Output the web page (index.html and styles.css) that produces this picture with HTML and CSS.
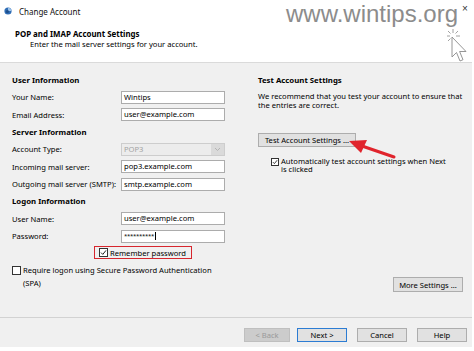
FILE: index.html
```html
<!DOCTYPE html>
<html lang="en">
<head>
    <meta charset="UTF-8">
    <meta name="viewport" content="width=device-width, initial-scale=1.0">
    <title>Change Account</title>
    <link rel="stylesheet" href="styles.css">
</head>
<body>
    <div class="dialog">
        <div class="titlebar">
            <svg class="app-icon" width="8" height="8" viewBox="0 0 8 8">
                <circle cx="4" cy="4" r="3.6" fill="#2f6db5"/>
                <path d="M4 0.8 A3.2 3.2 0 0 1 7.2 4 L4 4 Z" fill="#9cc3ea"/>
                <circle cx="3.4" cy="4.6" r="1.6" fill="#1d4f8c"/>
            </svg>
            <span>Change Account</span>
        </div>

        <div class="header">
            <div class="header-title">POP and IMAP Account Settings</div>
            <div class="header-sub">Enter the mail server settings for your account.</div>
        </div>

        <div class="content">
            <div class="col-left">
                <div class="section">User Information</div>
                <div class="row"><label>Your Name:</label><div class="field">Wintips</div></div>
                <div class="row"><label>Email Address:</label><div class="field">user@example.com</div></div>

                <div class="section">Server Information</div>
                <div class="row">
                    <label>Account Type:</label>
                    <div class="select">
                        <span>POP3</span>
                        <span class="select-arrow">
                            <svg width="7" height="5" viewBox="0 0 7 5"><path d="M1 1 L3.5 3.5 L6 1" fill="none" stroke="#b4b4b4" stroke-width="1"/></svg>
                        </span>
                    </div>
                </div>
                <div class="row"><label>Incoming mail server:</label><div class="field">pop3.example.com</div></div>
                <div class="row"><label>Outgoing mail server (SMTP):</label><div class="field">smtp.example.com</div></div>

                <div class="section">Logon Information</div>
                <div class="row"><label>User Name:</label><div class="field">user@example.com</div></div>
                <div class="row"><label>Password:</label><div class="field password">**********<span class="caret"></span></div></div>

                <div class="remember-row">
                    <span class="highlight">
                        <span class="checkbox checked">
                            <svg width="7" height="7" viewBox="0 0 7 7"><path d="M1 3.6 L2.8 5.4 L6 1.4" fill="none" stroke="#222" stroke-width="1"/></svg>
                        </span>
                        Remember password
                    </span>
                </div>

                <div class="spa">
                    <span class="checkbox"></span>
                    <span class="spa-text">Require logon using Secure Password Authentication<br>(SPA)</span>
                </div>
            </div>

            <div class="col-right">
                <div class="section">Test Account Settings</div>
                <div class="note">We recommend that you test your account to ensure that<br>the entries are correct.</div>
                <button class="btn btn-test">Test Account Settings ...</button>
                <div class="auto-check">
                    <span class="checkbox checked small">
                        <svg width="6" height="6" viewBox="0 0 7 7"><path d="M1 3.6 L2.8 5.4 L6 1.4" fill="none" stroke="#222" stroke-width="1"/></svg>
                    </span>
                    <span>Automatically test account settings when Next<br>is clicked</span>
                </div>
                <button class="btn btn-more">More Settings ...</button>
            </div>
        </div>

        <div class="footer">
            <button class="btn btn-back" disabled>&lt; Back</button>
            <button class="btn btn-next">Next &gt;</button>
            <button class="btn">Cancel</button>
            <button class="btn">Help</button>
        </div>
    </div>

    <div class="watermark">www.wintips.org</div>
    <div class="close-mark">&times;</div>

    <svg class="cursor-mark" width="24" height="40" viewBox="0 0 24 40">
        <g stroke="#8a8a8a" stroke-width="0.8">
            <line x1="7" y1="1" x2="7" y2="5"/>
            <line x1="1" y1="8" x2="4" y2="8"/>
            <line x1="2" y1="3" x2="4.5" y2="5.5"/>
            <line x1="12" y1="3" x2="9.5" y2="5.5"/>
            <line x1="14" y1="8" x2="10" y2="8"/>
            <line x1="2" y1="13" x2="4.5" y2="10.5"/>
        </g>
        <path d="M6 9 L6 29 L10.5 24.5 L14 33 L17 31.7 L13.6 23.5 L20 23.5 Z" fill="#fff" stroke="#8a8a8a" stroke-width="0.9"/>
    </svg>

    <svg class="red-arrow" width="60" height="24" viewBox="340 137 60 24">
        <line x1="394" y1="157" x2="362" y2="146" stroke="#e0242c" stroke-width="3" stroke-linecap="round"/>
        <polygon points="349,141 367,140 361,153" fill="#e0242c"/>
    </svg>
</body>
</html>
```

FILE: styles.css
```css
body {
    margin: 0;
    width: 474px;
    height: 351px;
    overflow: hidden;
    position: relative;
    background-color: #fff;
    font-family: "Noto Sans", "Open Sans", sans-serif;
    font-size: 7.6px;
    color: #000;
}
.dialog {
    width: 472px;
    height: 347px;
    display: flex;
    flex-direction: column;
    background-color: #f0f0f0;
}
.titlebar {
    height: 22px;
    flex-shrink: 0;
    background-color: #fff;
    display: flex;
    align-items: center;
    gap: 7px;
    padding-left: 4px;
    font-size: 8px;
    color: #111;
}
.header {
    height: 41px;
    flex-shrink: 0;
    box-sizing: border-box;
    background-color: #fff;
    border-bottom: 1px solid #dadada;
    padding: 7px 0 0 15px;
}
.header-title {
    font-weight: bold;
    font-size: 7.9px;
    line-height: 10px;
}
.header-sub {
    padding-left: 15px;
    line-height: 10px;
}
.content {
    flex: 1;
    display: flex;
    padding: 8.5px 9px 25px 12px;
}
.col-left {
    width: 214px;
}
.col-right {
    width: 205px;
    margin-left: 32px;
    display: flex;
    flex-direction: column;
}
.section {
    height: 17px;
    line-height: 17px;
    font-weight: bold;
    font-size: 7.8px;
}
.row {
    height: 17.5px;
    display: flex;
    align-items: center;
}
.row label {
    width: 109px;
    flex-shrink: 0;
}
.field {
    width: 104px;
    height: 13px;
    box-sizing: border-box;
    border: 1px solid #acacac;
    background-color: #fff;
    padding-left: 2px;
    line-height: 11px;
    white-space: nowrap;
}
.password {
    display: flex;
    align-items: center;
    letter-spacing: -0.3px;
    font-size: 6px;
}
.caret {
    width: 1px;
    height: 8px;
    background-color: #000;
    margin-left: 1px;
}
.select {
    width: 104px;
    height: 13px;
    box-sizing: border-box;
    border: 1px solid #cdcdcd;
    background-color: #ececec;
    color: #a3a3a3;
    display: flex;
    align-items: center;
    padding-left: 2px;
}
.select-arrow {
    margin-left: auto;
    width: 13px;
    height: 11px;
    background-color: #dadada;
    display: flex;
    align-items: center;
    justify-content: center;
}
.checkbox {
    width: 9px;
    height: 9px;
    box-sizing: border-box;
    border: 1px solid #333;
    background-color: #fff;
    display: inline-flex;
    align-items: center;
    justify-content: center;
    flex-shrink: 0;
}
.checkbox.small {
    width: 8px;
    height: 8px;
}
.remember-row {
    height: 15px;
    display: flex;
    align-items: center;
    padding-left: 82px;
}
.highlight {
    width: 98px;
    height: 13px;
    box-sizing: border-box;
    border: 1.5px solid #d7262e;
    display: flex;
    align-items: center;
    gap: 2px;
    padding-left: 4px;
}
.spa {
    margin-top: 6px;
    display: flex;
    gap: 2px;
}
.spa-text {
    line-height: 12.5px;
    margin-top: -2px;
}
.note {
    margin-top: 3px;
    line-height: 9px;
}
.auto-check {
    margin-top: 10px;
    margin-left: 13px;
    display: flex;
    gap: 2px;
    line-height: 8.7px;
}
.auto-check .checkbox {
    margin-top: 1px;
}
.btn {
    width: 50px;
    height: 14px;
    padding: 0;
    box-sizing: border-box;
    border: 1px solid #adadad;
    background-color: #e1e1e1;
    font-family: inherit;
    font-size: 7.6px;
    color: #000;
}
.btn-test {
    margin-top: 23px;
    width: 98px;
}
.btn-more {
    margin-top: auto;
    align-self: flex-end;
    width: 70px;
    height: 15px;
}
.footer {
    height: 30px;
    flex-shrink: 0;
    box-sizing: border-box;
    border-top: 1px solid #d2d2d2;
    display: flex;
    justify-content: flex-end;
    align-items: flex-start;
    gap: 10px;
    padding: 10px 5px 0 0;
}
.btn-back {
    width: 46px;
    margin-right: -3px;
    background-color: #cccccc;
    border-color: #bfbfbf;
    color: #9a9a9a;
}
.btn-next {
    border-color: #2c7cd3;
}
.watermark {
    position: absolute;
    top: 0;
    left: 286px;
    font-family: "Liberation Sans", Arial, sans-serif;
    font-size: 24px;
    line-height: 28px;
    color: #8c8c8c;
}
.close-mark {
    position: absolute;
    top: 3px;
    left: 462px;
    font-family: "Liberation Sans", Arial, sans-serif;
    font-size: 10px;
    color: #333;
}
.cursor-mark {
    position: absolute;
    top: 28px;
    left: 446px;
}
.red-arrow {
    position: absolute;
    top: 137px;
    left: 340px;
}
```
